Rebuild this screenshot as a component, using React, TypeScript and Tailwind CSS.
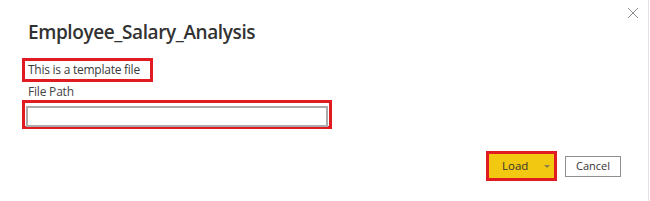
export default function App() {
  return (
    <div
      className="relative h-[201px] w-[650px] overflow-hidden bg-white text-[#333]"
      style={{ fontFamily: '"Open Sans", "Noto Sans", sans-serif' }}
    >
      <div className="flex h-full w-[649px] flex-col border-r border-[#e3e3e3] pl-[22px] pt-[19px]">
        {/* close */}
        <button className="absolute left-[627px] top-[7px] grid h-[12px] w-[12px] place-items-center">
          <svg width="12" height="12" viewBox="0 0 12 12" fill="none" stroke="#8c8c8c" strokeWidth="1">
            <path d="M1 1l10 10M11 1L1 11" />
          </svg>
        </button>

        <h1 className="ml-[6px] text-[19px] font-semibold leading-[26px] tracking-[-0.4px] text-[#323232]">
          Employee_Salary_Analysis
        </h1>

        <div className="mt-[13px] flex h-[24px] w-[131px] items-center border-[3px] border-[#e11b22] pl-[3px] text-[12px] tracking-[-0.25px] text-[#3a3a3a]">
          This is a template file
        </div>

        <div className="ml-[6px] mt-[3px] text-[12px] leading-[14px] tracking-[-0.2px] text-[#444]">File Path</div>

        <div className="mt-[1px] h-[29px] w-[310px] border-[3px] border-[#e11b22] p-[1px]">
          <input className="h-full w-full border-2 border-[#ababab] bg-white outline-none" />
        </div>

        <div className="mt-[22px] flex items-center justify-end gap-[8px] pr-[27px]">
          <div className="border-[3px] border-[#e11b22]">
            <button className="flex h-[24px] w-[65px] items-center bg-[#f2c811] pl-[13px] text-[11.5px] text-[#333]">
              <span>Load</span>
              <span className="ml-[16px] h-0 w-0 border-x-[3px] border-t-[3px] border-x-transparent border-t-[#8a7d4a]" />
            </button>
          </div>
          <button className="h-[21px] w-[56px] border border-[#8f8f8f] bg-white text-[11px] text-[#333]">
            Cancel
          </button>
        </div>
      </div>
    </div>
  );
}
